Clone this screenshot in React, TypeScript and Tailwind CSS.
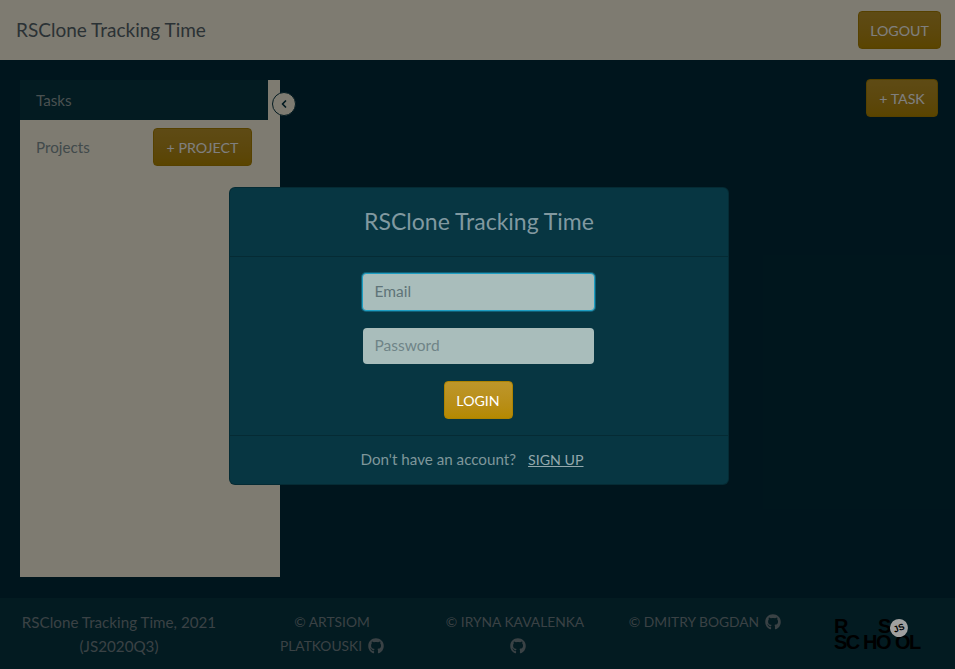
import { ChevronLeft } from "lucide-react";
import { FC, ReactNode } from "react";
import { FaGithub } from "react-icons/fa";

const goldButton =
  "rounded border border-[#ad8300] bg-gradient-to-b from-[#bd962a] to-[#b58900] pt-px text-white";

const GoldButton: FC<{ className?: string; children: ReactNode }> = ({
  className,
  children,
}) => (
  <button className={`${goldButton} h-[38px] text-[14.2px] leading-6 ${className}`}>
    {children}
  </button>
);

const Author: FC<{ className: string; children: ReactNode }> = ({
  className,
  children,
}) => (
  <p className={`text-center text-[13.8px] leading-[24px] ${className}`}>
    {children}
    <FaGithub className="ml-1.5 inline-block h-4 w-4 align-[-3px]" />
  </p>
);

const RsLogo = () => (
  <div className="relative h-8 w-[87px] font-['Liberation_Sans',sans-serif] text-[20px] leading-[16px] font-bold tracking-[-1.5px] text-black">
    <div className="flex">
      <span className="w-[44px]">R</span>
      <span>S</span>
    </div>
    <div className="flex">
      <span className="w-[29px]">SC</span>
      <span className="w-[32px]">HO</span>
      <span>OL</span>
    </div>
    <div className="absolute top-px left-[56px] z-10 flex h-[18px] w-[18px] rotate-[-20deg] items-center justify-center rounded-full bg-[#a0a0a0] text-[9px] tracking-normal">
      JS
    </div>
  </div>
);

const App = () => {
  return (
    <div className="relative flex h-[669px] w-[955px] flex-col overflow-hidden bg-[#002b3a] font-['Lato',sans-serif] text-[15.2px]">
      <header className="flex h-[60px] items-center justify-between bg-[#fdf6e3] pr-3.5 pl-4">
        <h1 className="text-[19px] text-[#56646a]">RSClone Tracking Time</h1>
        <GoldButton className="w-[83px]">LOGOUT</GoldButton>
      </header>

      <main className="flex flex-1 items-start justify-between pt-5 pr-[17px] pl-5">
        <aside className="relative h-[497px] w-[260px] bg-[#fdf6e3]">
          <div className="flex h-10 w-[248px] items-center bg-[#073642] pl-4 text-[#93a1a1]">
            Tasks
          </div>
          <div className="flex w-[232px] items-center justify-between pt-2 pl-4 text-[#839496]">
            <span>Projects</span>
            <GoldButton className="w-[99px]">+ PROJECT</GoldButton>
          </div>
          <button className="absolute top-3 right-[-16px] flex h-6 w-6 items-center justify-center rounded-full border border-[#073642] bg-[#fdf6e3] text-[#073642]">
            <ChevronLeft className="h-3 w-3" strokeWidth={3.5} />
          </button>
        </aside>
        <GoldButton className="-mt-px w-[72px]">+ TASK</GoldButton>
      </main>

      <footer className="flex h-[71px] items-start bg-[#073642] pt-3 text-[#75848a]">
        <p className="ml-[20px] w-[198px] text-center leading-[24px]">
          RSClone Tracking Time, 2021 (JS2020Q3)
        </p>
        <Author className="ml-[39px] w-[150px]">© ARTSIOM PLATKOUSKI</Author>
        <Author className="ml-[33px] w-[150px]">© IRYNA KAVALENKA</Author>
        <Author className="ml-[30px] w-[170px] whitespace-nowrap">
          © DMITRY BOGDAN
        </Author>
        <div className="mt-[8px] ml-[44px]">
          <RsLogo />
        </div>
      </footer>

      <div className="absolute inset-0 flex items-start justify-center bg-black/50 pt-[187px] pl-[3px]">
        <div className="flex h-[298px] w-[500px] flex-col rounded-md border border-black/20 bg-[#073642] text-[#7f979b]">
          <div className="flex h-[69px] items-center justify-center border-b border-black/20 pb-px">
            <h2 className="text-[23px] text-[#8199a0]">RSClone Tracking Time</h2>
          </div>
          <form className="flex flex-1 flex-col items-center pt-4 pr-0.5">
            <input
              placeholder="Email"
              className="h-[38px] w-[233px] rounded border border-[#1e9ec2] bg-[#a9bdbb] px-3 pb-0.5 text-[15.5px] ring-1 ring-[#1e9ec2]/40 placeholder:text-[#5f7478]"
            />
            <input
              placeholder="Password"
              className="mt-[17px] h-9 w-[231px] rounded bg-[#a9bdbb] px-3 pb-0.5 text-[15.5px] placeholder:text-[#6f8487]"
            />
            <GoldButton className="mt-[17px] w-[69px]">LOGIN</GoldButton>
          </form>
          <div className="flex h-[49px] items-center justify-center gap-3 border-t border-black/20 pr-[14px] pb-px">
            <span>Don't have an account?</span>
            <a className="text-[14.2px] text-[#93a8ac] underline">SIGN UP</a>
          </div>
        </div>
      </div>
    </div>
  );
};

export default App;
